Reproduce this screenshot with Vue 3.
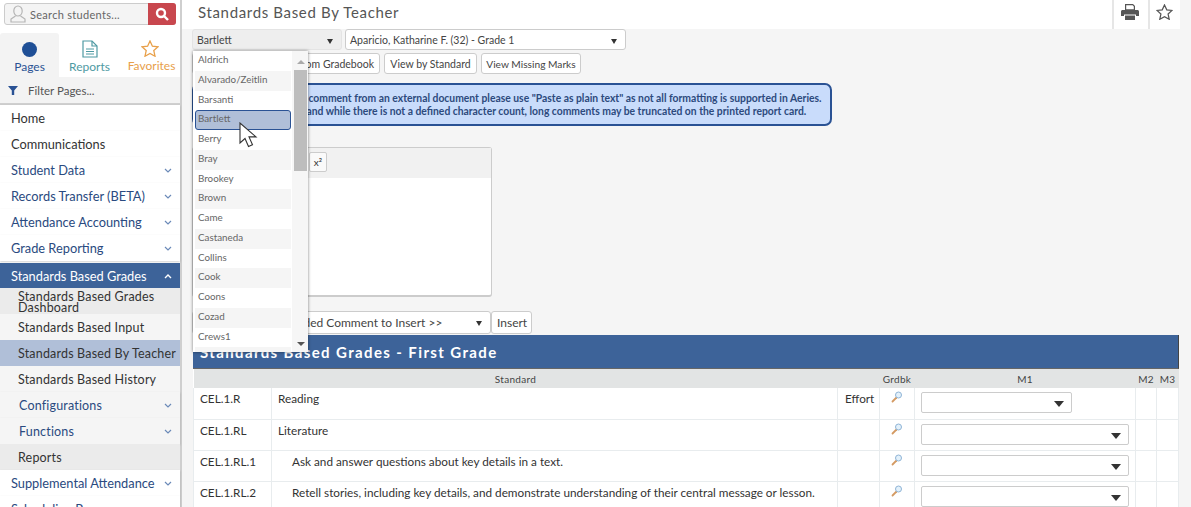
<script setup>
const nav1 = [
  { t: 'Home' }, { t: 'Communications' }, { t: 'Student Data', c: 1 }, { t: 'Records Transfer (BETA)', c: 1 },
  { t: 'Attendance Accounting', c: 1 }, { t: 'Grade Reporting', c: 1 }
]
const sub = [
  { t: 'Standards Based Grades Dashboard', k: 'dash' }, { t: 'Standards Based Input', k: 'lite' },
  { t: 'Standards Based By Teacher', k: 'cur' }, { t: 'Standards Based History', k: 'lite' },
  { t: 'Configurations', k: 'group' }, { t: 'Functions', k: 'group' }, { t: 'Reports', k: 'rep' }
]
const teachers = ['Aldrich','Alvarado/Zeitlin','Barsanti','Bartlett','Berry','Bray','Brookey','Brown','Came','Castaneda','Collins','Cook','Coons','Cozad','Crews1','Cruickshank']
const rows = [
  { code: 'CEL.1.R', text: 'Reading', effort: 'Effort', short: true },
  { code: 'CEL.1.RL', text: 'Literature' },
  { code: 'CEL.1.RL.1', text: 'Ask and answer questions about key details in a text.', ind: true },
  { code: 'CEL.1.RL.2', text: 'Retell stories, including key details, and demonstrate understanding of their central message or lesson.', ind: true }
]
</script>

<template>
  <div class="page">
    <aside class="side">
      <div class="search">
        <svg class="user" width="16" height="18" viewBox="0 0 16 18" fill="none" stroke="#b5b5b5" stroke-width="1.2"><ellipse cx="8" cy="6" rx="4.2" ry="5"/><path d="M5.500 11 1 14v3h14v-3l-4.500-3"/></svg>
        <span class="search-text">Search students...</span>
        <span class="search-btn"><svg width="14" height="14" viewBox="0 0 14 14" fill="none" stroke="#fff" stroke-width="2.4"><circle cx="6" cy="6" r="4"/><path d="m9 9 4 4"/></svg></span>
      </div>
      <div class="tabs">
        <div class="tab on"><span class="dot"></span><span>Pages</span></div>
        <div class="tab rep">
          <svg width="16" height="18" viewBox="0 0 16 18" fill="none" stroke="#4f9aa3" stroke-width="1.2"><path d="M1 1h9l5 5v11H1z"/><path d="M10 1v5h5"/><path d="M4 9h8M4 11.500h8M4 14h8" stroke-width="1"/></svg>
          <span>Reports</span>
        </div>
        <div class="tab fav">
          <svg class="fav-star" width="18" height="17" viewBox="0 0 18 17" fill="none" stroke="#e8a04a" stroke-width="1.300"><path d="m9 1 2.400 5.200 5.600.6-4.200 3.800 1.200 5.600L9 13.400l-5 2.800 1.200-5.600L1 6.800l5.600-.6z"/></svg>
          <span>Favorites</span>
        </div>
      </div>
      <div class="filter">
        <svg width="10" height="9" viewBox="0 0 10 9" fill="#2a5294"><path d="M0 0h10L6.200 4.500V9H3.800V4.500z"/></svg>
        <span>Filter Pages...</span>
      </div>
      <nav class="nav">
        <div v-for="n in nav1" :key="n.t" class="item">
          <span>{{ n.t }}</span>
          <svg v-if="n.c" class="chev" width="8" height="5" viewBox="0 0 8 5" fill="none" stroke="#6b8ab8" stroke-width="1.200"><path d="m1 1 3 3 3-3"/></svg>
        </div>
        <div class="item active">
          <span>Standards Based Grades</span>
          <svg class="chev" width="8" height="5" viewBox="0 0 8 5" fill="none" stroke="#fff" stroke-width="1.400"><path d="m1 4 3-3 3 3"/></svg>
        </div>
        <div v-for="s in sub" :key="s.t" class="subitem" :class="s.k">
          <span>{{ s.t }}</span>
          <svg v-if="s.k === 'group'" class="chev" width="8" height="5" viewBox="0 0 8 5" fill="none" stroke="#6b8ab8" stroke-width="1.200"><path d="m1 1 3 3 3-3"/></svg>
        </div>
        <div class="item">
          <span>Supplemental Attendance</span>
          <svg class="chev" width="8" height="5" viewBox="0 0 8 5" fill="none" stroke="#6b8ab8" stroke-width="1.200"><path d="m1 1 3 3 3-3"/></svg>
        </div>
        <div class="item"><span>Scheduling Process</span></div>
      </nav>
    </aside>

    <main class="main">
      <header class="top">
        <h1>Standards Based By Teacher</h1>
        <div class="act print">
          <svg width="18" height="16" viewBox="0 0 18 16" fill="#555"><path d="M4 0h8l2 2v4H4zM5.200 1.200v4h7.600V2.600L11.600 1.200z"/><path d="M1.500 6h15c.8 0 1.500.7 1.500 1.500V12h-3v-1.500H3V12H0V7.500C0 6.700.7 6 1.500 6z"/><path d="M4 11.500h10V16H4z"/></svg>
        </div>
        <div class="act fave">
          <svg width="17" height="16" viewBox="0 0 18 17" fill="none" stroke="#555" stroke-width="1.300"><path d="m9 1 2.400 5.200 5.600.6-4.200 3.800 1.200 5.600L9 13.400l-5 2.800 1.200-5.600L1 6.800l5.600-.6z"/></svg>
        </div>
      </header>

      <div class="content">
        <div class="selects">
          <div class="sel teacher"><span>Bartlett</span><i class="tri"></i></div>
          <div class="sel student"><span>Aparicio, Katharine F. (32) - Grade 1</span><i class="tri"></i></div>
        </div>
        <div class="btns">
          <button class="btn wide">Load Marks From Gradebook</button>
          <button class="btn std">View by Standard</button>
          <button class="btn miss">View Missing Marks</button>
        </div>
        <div class="notice">
          <div>When pasting a comment from an external document please use "Paste as plain text" as not all formatting is supported in Aeries.</div>
          <div>Please be brief, and while there is not a defined character count, long comments may be truncated on the printed report card.</div>
        </div>
        <div class="editor">
          <div class="bar"><span class="sup">x²</span></div>
          <div class="area"></div>
        </div>
        <div class="insert">
          <div class="sel coded"><span>Select a Coded Comment to Insert &gt;&gt;</span><i class="tri"></i></div>
          <button class="btn ins">Insert</button>
        </div>

        <section class="panel">
          <h2>Standards Based Grades - First Grade</h2>
          <table>
            <colgroup><col class="c1"><col class="c2"><col class="c3"><col class="c4"><col class="c5"><col class="c6"><col class="c7"></colgroup>
            <thead><tr><th colspan="2">Standard</th><th></th><th>Grdbk</th><th>M1</th><th>M2</th><th>M3</th></tr></thead>
            <tbody>
              <tr v-for="r in rows" :key="r.code">
                <td>{{ r.code }}</td>
                <td :class="{ ind: r.ind }">{{ r.text }}</td>
                <td class="eff">{{ r.effort }}</td>
                <td class="mag">
                  <svg width="12" height="12" viewBox="0 0 12 12"><path d="M5.500 6.500 1.500 10.500" stroke="#d49a62" stroke-width="1.800" stroke-linecap="round"/><circle cx="7.500" cy="4" r="3" fill="#e3f1fb" stroke="#8fb4d6"/></svg>
                </td>
                <td class="mk"><div class="msel" :class="{ short: r.short }"><i class="tri big"></i></div></td>
                <td></td><td></td>
              </tr>
            </tbody>
          </table>
        </section>
      </div>

      <div class="drop">
        <ul class="list">
          <li v-for="t in teachers" :key="t" :class="{ pick: t === 'Bartlett' }">{{ t }}</li>
        </ul>
        <div class="scroll">
          <i class="up"></i><span class="thumb"></span><i class="down"></i>
        </div>
      </div>
      <svg class="cursor" width="20" height="27" viewBox="0 0 20 27"><path d="M1 1v20l5-4.500 3.500 8 4-1.800-3.500-7.800h7z" fill="#fff" stroke="#333" stroke-width="1.100"/></svg>
    </main>
  </div>
</template>

<style>
html, body { margin: 0; background: #fff; overflow: hidden; }
</style>

<style scoped>
.page { display: flex; width: 1191px; height: 507px; overflow: hidden; font-family: Lato, "Open Sans", sans-serif; color: #333; font-size: 12px; }
.side { width: 180px; flex: none; border-right: 2px solid #cfcfcf; background: #fff; }
.search { display: flex; align-items: center; height: 22px; margin: 3px 4px 0; border: 1px solid #ccc; border-radius: 3px; background: #f4f4f4; box-sizing: border-box; width: 172px; }
.user { margin-left: 5px; flex: none; }
.search-text { margin-left: 4px; flex: 1; color: #666; font-size: 11px; letter-spacing: .3px; }
.search-btn { width: 28px; height: 22px; margin: -1px; background: #c8474e; border-radius: 0 3px 3px 0; display: flex; align-items: center; justify-content: center; flex: none; }
.tabs { display: flex; height: 44px; margin-top: 8px; }
.tab { width: 60px; display: flex; flex-direction: column; align-items: center; font-size: 12px; padding-top: 7px; box-sizing: border-box; gap: 2px; line-height: 14px; }
.tab.on { width: 59px; padding-top: 9px; gap: 3px; background: #f3f3f3; border-radius: 3px 3px 0 0; color: #2a5294; }
.tab.rep { width: 61px; color: #4f9aa3; }
.tab.fav { padding-left: 3px; color: #e8a04a; }
.fav-star { margin-right: 3px; }
.dot { width: 15px; height: 15px; border-radius: 50%; background: #1f4f96; }
.filter { height: 28px; box-sizing: border-box; background: #f3f3f3; border-bottom: 2px solid #cfcfcf; display: flex; align-items: center; padding-left: 8px; gap: 10px; color: #555; font-size: 11.500px; }
.item { position: relative; height: 26px; display: flex; align-items: center; padding-left: 11px; font-size: 12.800px; color: #2a4a80; background: #fff; box-shadow: 0 1px 2px rgba(0,0,0,.18); box-sizing: border-box; }
.item:nth-child(-n+2) { color: #333; }
.chev { position: absolute; right: 8px; top: 11px; }
.item.active { height: 25px; margin-top: 2px; background: #3d6399; color: #fff; box-shadow: none; }
.subitem { position: relative; height: 26px; display: flex; align-items: center; padding-left: 18px; font-size: 12.500px; letter-spacing: .18px; background: #f5f5f5; color: #333; box-sizing: border-box; }
.subitem.dash { background: #ebebeb; line-height: 11px; padding: 1px 4px 0 18px; }
.subitem.cur { background: #b0bfd8; white-space: nowrap; }
.subitem.group { color: #2a4a80; padding-left: 19px; box-shadow: 0 1px 2px rgba(0,0,0,.2); }
.subitem.rep { background: #ebebeb; }
.main { position: relative; flex: 1; background: #f5f5f5; min-width: 0; }
.top { display: flex; align-items: stretch; height: 29px; background: #fff; margin-right: 11px; }
h1 { flex: 1; margin: 0; padding-left: 16px; font-size: 15px; line-height: 25px; font-weight: 400; color: #555; letter-spacing: .66px; }
.act { box-sizing: border-box; border-left: 2px solid #e6e6e6; display: flex; align-items: center; justify-content: center; padding-bottom: 5px; }
.print { width: 36px; padding-right: 3px; }
.fave { width: 32px; padding-right: 2px; }
.content { padding-left: 10px; }
.selects { display: flex; gap: 3px; height: 21px; }
.sel { position: relative; height: 21px; box-sizing: border-box; border: 1px solid #ccc; border-radius: 3px; background: #fff; display: flex; align-items: center; padding-left: 4px; font-size: 10.500px; color: #444; }
.teacher { width: 150px; background: #eee; border-color: #e4e4e4; }
.student { width: 281px; }
.tri { position: absolute; right: 8px; top: 9px; border: 3.500px solid transparent; border-top: 5px solid #333; border-bottom: 0; }
.tri.big { right: 7px; top: 8px; border-width: 6px 5.500px 0; border-style: solid; border-color: #333 transparent transparent; }
.btns { display: flex; gap: 4px; margin-top: 3px; height: 21px; }
.btn { height: 21px; box-sizing: border-box; border: 1px solid #ccc; border-radius: 3px; background: #fff; padding: 0 5px; font: 10.500px Lato, sans-serif; color: #444; white-space: nowrap; }
.btn.wide { width: 188px; text-align: right; }
.btn.std { width: 93px; padding: 0; }
.btn.miss { width: 100px; padding: 0; font-size: 10.200px; }
.notice { width: 640px; height: 43px; margin-top: 9px; box-sizing: border-box; border: 2px solid #2a5294; border-radius: 7px; background: #c9dcfb; padding: 7px 0 0 40px; font-size: 10.350px; line-height: 13px; font-weight: 700; color: #2d4a7d; white-space: nowrap; overflow: hidden; }
.editor { width: 300px; height: 150px; margin-top: 21px; box-sizing: border-box; border: 1px solid #ccc; border-bottom-width: 2px; border-radius: 3px; background: #fff; }
.bar { height: 30px; background: #f1f1f1; position: relative; }
.sup { position: absolute; left: 116px; top: 4px; width: 18px; height: 20px; box-sizing: border-box; border: 1px solid #ccc; border-radius: 2px; background: #fafafa; text-align: center; line-height: 18px; font-size: 10px; }
.insert { display: flex; margin-top: 14px; height: 24px; }
.coded { width: 299px; height: 23px; justify-content: center; font-size: 12px; }
.ins { height: 23px; margin-left: 0; padding: 0 5px; font-size: 12px; width: 41px; }
.panel { width: 986px; margin-left: 1px; }
h2 { margin: 0; height: 34px; background: #3d6399; color: #fff; font-size: 15px; font-weight: 700; line-height: 34px; padding-left: 7px; letter-spacing: 1.380px; border-right: 1px solid #444; border-bottom: 1px solid #666; box-sizing: border-box; }
table { width: 985px; border-collapse: collapse; table-layout: fixed; background: #fff; }
.c1 { width: 78px; } .c2 { width: 566px; } .c3 { width: 42px; } .c4 { width: 35px; } .c5 { width: 221px; } .c6 { width: 21px; } .c7 { width: 22px; }
th { height: 19px; padding: 0; background: #e2e4e4; font-size: 10px; font-weight: 400; color: #444; letter-spacing: .3px; }
td { height: 31px; box-sizing: border-box; padding: 3px 6px 0; vertical-align: top; border: 1px solid #e8ecee; border-top: 0; font-size: 11.750px; line-height: 15px; white-space: nowrap; color: #333; }
td.ind { padding-left: 20px; }
td.eff { padding-left: 7px; }
td.mag { text-align: center; padding: 3px 0 0; }
td.mk { padding: 4px 6px 0; }
.msel { position: relative; height: 21px; box-sizing: border-box; border: 1px solid #ccc; border-radius: 2px; background: #fff; }
.msel.short { width: 151px; }
.drop { position: absolute; left: 11px; top: 51px; width: 115px; height: 301px; background: #fff; box-shadow: 0 0 3px rgba(0,0,0,.5); display: flex; overflow: hidden; z-index: 5; }
.list { list-style: none; margin: 0; padding: 0 0 0 2px; width: 96px; flex: none; font-size: 9.800px; color: #666; }
.list li { height: 19.750px; line-height: 16px; padding-left: 3px; box-sizing: border-box; }
.list li:nth-child(even) { background: #f5f5f5; }
.list li.pick { background: #b0bfd8; border: 1px solid #2a5294; border-radius: 3px; padding-left: 2px; line-height: 14px; }
.scroll { position: relative; flex: 1; margin-left: 1px; background: #f6f6f6; }
.thumb { position: absolute; left: 2px; top: 19px; width: 13px; height: 101px; background: #bdbdbd; }
.up, .down { position: absolute; left: 5px; border-style: solid; border-color: transparent; }
.up { top: 9px; border-width: 0 4px 4px; border-bottom-color: #aaa; }
.down { top: 291px; border-width: 4px 4px 0; border-top-color: #555; }
.cursor { position: absolute; left: 57px; top: 122px; z-index: 6; }
</style>
